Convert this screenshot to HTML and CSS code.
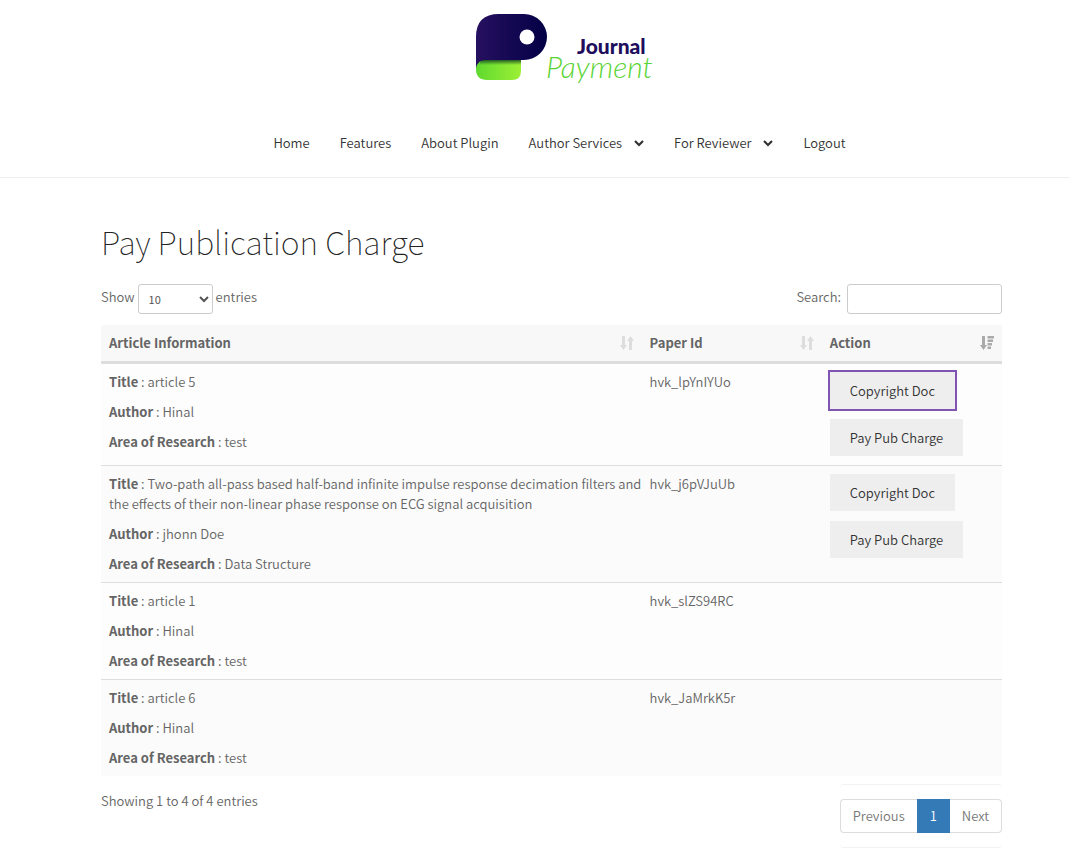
FILE: index.html
```
<!DOCTYPE html>
<html lang="en">

<head>
    <meta charset="utf-8">
    <meta name="viewport" content="width=device-width, initial-scale=1">
    <title>Pay Publication Charge</title>
    <link rel="stylesheet" href="styles.css">
</head>

<body>
    <svg class="sprite" aria-hidden="true">
        <symbol id="sort" viewBox="0 0 14 14">
            <path d="M2 0h3v9h2L3.500 14 0 9h2zM9 14V5H7l3.500-5L14 5h-2v9z" />
        </symbol>
        <symbol id="sort-desc" viewBox="0 0 14 14">
            <path d="M2 0h3v9h2L3.500 14 0 9h2zM7.500 0H14v2.500H7.500zM7.500 3.500H13V6H7.500zM7.500 7H12v2.500H7.500zM7.500 10.500H11V13H7.500z" />
        </symbol>
        <symbol id="chevron" viewBox="0 0 10 7">
            <path d="M1 1l4 4 4-4" fill="none" stroke="currentColor" stroke-width="2.200" />
        </symbol>
    </svg>

    <header class="site-header">
        <a href="#" class="logo">
            <svg width="180" height="72" viewBox="0 0 180 72" role="img" aria-label="Journal Payment">
                <defs>
                    <linearGradient id="navy">
                        <stop offset="0" stop-color="#261060" />
                        <stop offset="1" stop-color="#030045" />
                    </linearGradient>
                    <linearGradient id="green">
                        <stop offset="0" stop-color="#5fd92f" />
                        <stop offset="1" stop-color="#9df035" />
                    </linearGradient>
                    <linearGradient id="shade" x1="0" y1="0" x2="0" y2="1">
                        <stop offset="0" stop-color="#0b3a20" stop-opacity="0.8" />
                        <stop offset="1" stop-color="#0b3a20" stop-opacity="0" />
                    </linearGradient>
                </defs>
                <path d="M0 53Q1 45 9 45H45V57Q45 66 36 66H11Q0 66 0 55z" fill="url(#green)" />
                <path d="M5 46H45V51H3z" fill="url(#shade)" />
                <path d="M0 54V23Q0 0 23 0H48A23 23 0 0 1 48 46H9Q2 46 0 54z" fill="url(#navy)" />
                <circle cx="51" cy="23" r="7.500" fill="#fff" />
                <text x="101" y="40" class="logo-name">Journal</text>
                <text x="70" y="64" class="logo-script">Payment</text>
            </svg>
        </a>
        <nav class="main-nav">
            <a href="#">Home</a>
            <a href="#">Features</a>
            <a href="#">About Plugin</a>
            <a href="#">Author Services <svg class="chevron"><use href="#chevron" /></svg></a>
            <a href="#">For Reviewer <svg class="chevron"><use href="#chevron" /></svg></a>
            <a href="#">Logout</a>
        </nav>
    </header>

    <main class="content">
        <h1>Pay Publication Charge</h1>

        <div class="table-tools">
            <label>Show
                <select>
                    <option>10</option>
                    <option>25</option>
                    <option>50</option>
                    <option>100</option>
                </select>
                entries</label>
            <label class="search">Search: <input type="search"></label>
        </div>

        <table class="articles">
            <thead>
                <tr>
                    <th class="col-info"><div class="th-inner">Article Information <svg class="sort"><use href="#sort" /></svg></div></th>
                    <th><div class="th-inner">Paper Id <svg class="sort"><use href="#sort" /></svg></div></th>
                    <th><div class="th-inner">Action <svg class="sort active"><use href="#sort-desc" /></svg></div></th>
                </tr>
            </thead>
            <tbody>
                <tr>
                    <td class="article">
                        <p><b>Title</b> : article 5</p>
                        <p><b>Author</b> : Hinal</p>
                        <p><b>Area of Research</b> : test</p>
                    </td>
                    <td>hvk_lpYnIYUo</td>
                    <td>
                        <div class="actions">
                            <button type="button" class="selected">Copyright Doc</button>
                            <button type="button">Pay Pub Charge</button>
                        </div>
                    </td>
                </tr>
                <tr>
                    <td class="article">
                        <p><b>Title</b> : Two-path all-pass based half-band infinite impulse response decimation filters and the effects of their non-linear phase response on ECG signal acquisition</p>
                        <p><b>Author</b> : jhonn Doe</p>
                        <p><b>Area of Research</b> : Data Structure</p>
                    </td>
                    <td>hvk_j6pVJuUb</td>
                    <td>
                        <div class="actions">
                            <button type="button">Copyright Doc</button>
                            <button type="button">Pay Pub Charge</button>
                        </div>
                    </td>
                </tr>
                <tr>
                    <td class="article">
                        <p><b>Title</b> : article 1</p>
                        <p><b>Author</b> : Hinal</p>
                        <p><b>Area of Research</b> : test</p>
                    </td>
                    <td>hvk_slZS94RC</td>
                    <td></td>
                </tr>
                <tr>
                    <td class="article">
                        <p><b>Title</b> : article 6</p>
                        <p><b>Author</b> : Hinal</p>
                        <p><b>Area of Research</b> : test</p>
                    </td>
                    <td>hvk_JaMrkK5r</td>
                    <td></td>
                </tr>
            </tbody>
        </table>

        <div class="table-footer">
            <div class="info">Showing 1 to 4 of 4 entries</div>
            <div class="pagination">
                <a href="#">Previous</a>
                <a href="#" class="current">1</a>
                <a href="#">Next</a>
            </div>
        </div>
    </main>
</body>

</html>
```
FILE: styles.css
```
* {
    box-sizing: border-box;
}

body {
    margin: 0;
    background-color: #fff;
    color: #656565;
    font-family: "Source Sans Pro", "Noto Sans CJK JP", sans-serif;
    font-size: 13px;
    font-weight: 350;
    line-height: 20px;
}

a {
    color: #333;
    text-decoration: none;
}

b,
th {
    font-weight: 700;
}

.sprite {
    display: none;
}

.site-header {
    display: flex;
    flex-direction: column;
    align-items: center;
    gap: 47px;
    padding: 14px 0 24px 49px;
    border-bottom: 1px solid #eee;
}

.logo {
    margin-left: 12px;
}

.logo svg {
    display: block;
    overflow: visible;
}

.logo-name {
    font-family: Lato, sans-serif;
    font-size: 21px;
    font-weight: 900;
    fill: #200d5c;
}

.logo-script {
    font-family: Lato, sans-serif;
    font-size: 30px;
    font-style: italic;
    font-weight: 300;
    fill: #5bd435;
}

.main-nav {
    display: flex;
    gap: 30px;
}

.chevron {
    width: 10px;
    height: 7px;
    margin: -2px 0 0 9px;
    vertical-align: middle;
}

.content {
    padding: 40px 68px 0 101px;
}

h1 {
    margin: 0 0 20px;
    color: #222;
    font-size: 32px;
    font-weight: 100;
    line-height: 46px;
}

.table-tools {
    display: flex;
    justify-content: space-between;
    margin-bottom: 11px;
}

.table-tools label {
    display: flex;
    align-items: flex-start;
    gap: 3px;
    line-height: 26px;
}

.table-tools .search {
    gap: 6px;
}

select,
input {
    height: 30px;
    border: 1px solid #ccc;
    border-radius: 3px;
    background-color: #fff;
    color: #555;
    font-family: inherit;
    font-size: 11px;
}

select {
    width: 75px;
    padding: 5px 6px;
}

input {
    width: 155px;
    padding: 5px 10px;
}

.articles {
    width: 100%;
    border-collapse: separate;
    border-spacing: 0;
    table-layout: fixed;
}

.articles th {
    padding: 8px;
    background-color: #f8f8f8;
    border-bottom: 3px solid #ddd;
    text-align: left;
}

.col-info {
    width: 60%;
}

.th-inner {
    display: flex;
    justify-content: space-between;
    align-items: center;
}

.sort {
    width: 14px;
    height: 14px;
    fill: #ddd;
}

.sort.active {
    fill: #aaa;
}

.articles td {
    padding: 8px;
    background-color: #fdfdfd;
    border-top: 1px solid #ddd;
    vertical-align: top;
}

.articles .article {
    padding-right: 0;
}

.articles tr:first-child td {
    border-top: none;
}

.articles tr:nth-child(even) td {
    background-color: #fbfbfb;
}

.articles p {
    margin: 0 0 10px;
}

.articles p:last-child {
    margin-bottom: 0;
}

.actions {
    display: flex;
    flex-direction: column;
    align-items: flex-start;
    gap: 10px;
    padding-bottom: 1px;
}

.actions button {
    height: 37px;
    padding: 0 20px;
    border: none;
    background-color: #eee;
    color: #333;
    font-family: inherit;
    font-size: 13px;
    font-weight: inherit;
}

.actions .selected {
    outline: 2px solid #7f54b3;
}

.table-footer {
    display: flex;
    justify-content: space-between;
    align-items: flex-start;
    padding-top: 8px;
}

.info {
    padding-top: 7px;
}

.pagination {
    display: flex;
    padding: 14px 0;
    border: solid #f2f2f2;
    border-width: 1px 0;
    border-radius: 4px;
}

.pagination a {
    padding: 6px 12px;
    border: 1px solid #ddd;
    color: #777;
}

.pagination a:first-child {
    border-right: none;
    border-radius: 4px 0 0 4px;
}

.pagination a:last-child {
    border-left: none;
    border-radius: 0 4px 4px 0;
}

.pagination .current {
    border-color: #337ab7;
    background-color: #337ab7;
    color: #fff;
}
```
